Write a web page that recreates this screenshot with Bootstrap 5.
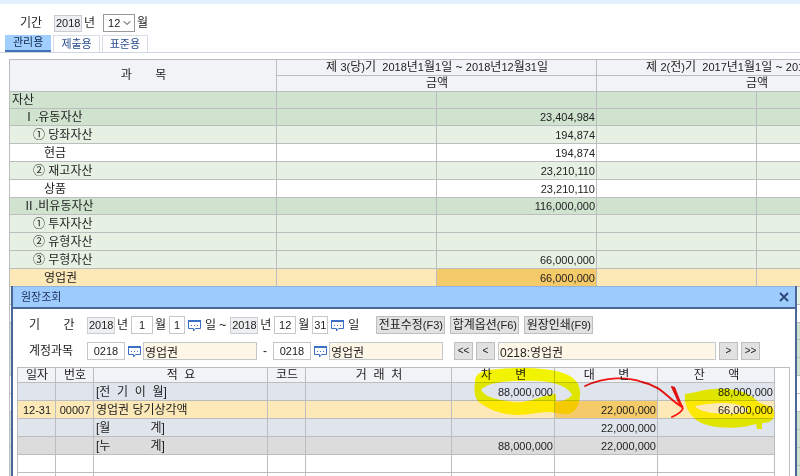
<!DOCTYPE html>
<html lang="ko">
<head>
<meta charset="utf-8">
<meta name="viewport" content="width=device-width, initial-scale=1">
<title>재무상태표 - 원장조회</title>
<link href="https://cdn.jsdelivr.net/npm/bootstrap@5.3.0/dist/css/bootstrap.min.css" rel="stylesheet">
<style>
body { font: 12px/16px "Liberation Sans", "Noto Sans CJK KR", sans-serif; color: #222; background: #fff; }
.screen { height: 100vh; border-top: 4px solid #e3f0ff; }
.num { font-size: 11px; }
.keep { white-space: pre; }
.form-control, .form-select { font-size: 11px; line-height: 16px; padding: 0 2px; border: 1px solid #c4c7cc; border-radius: 0; color: #222; min-height: 0; height: 18px; background-color: #fff; }
.form-control.fixed { background-color: #eeeff1; border-color: #c9ccd2; height: 17px; }
.form-control.acct { background-color: #fef6e6; font-size: 12px; padding: 0 1px; }
.w-year { width: 28px; padding: 0 1px; } .w-mon { width: 22px; } .w-day { width: 16px; padding: 0; } .w-code { width: 38px; } .w-acct { width: 114px; }
.form-select { width: 32px; padding: 0 4px; background-size: 8px 8px; background-position: right 3px center; border-color: #999; }
.unit { margin: 0 3px 0 2px; }
.criteria { padding: 7px 20px 0; height: 31px; }
.criteria .lbl { width: 34px; }
.tabs { border-bottom: 1px solid #cdd6e2; padding: 0 5px; gap: 2px; }
.tabs .nav-link { border: 1px solid #d8dce6; border-bottom: 0; border-radius: 0; padding: 0 7px; color: #2d4f8f; font-size: 11px; line-height: 16px; background: #fff; }
.tabs .nav-link.active { background: #9fceff; color: #14284a; border: 0; border-bottom: 2px solid #4371b8; padding: 0 8px; line-height: 15px; }
.sheet { margin: 6px 0 0 9px; }
table { table-layout: fixed; border-collapse: separate; border-spacing: 0; }
th, td { border-right: 1px solid #bbbdbf; border-bottom: 1px solid #bbbdbf; padding: 0 1px 0 2px; font-weight: 400; white-space: pre; overflow: hidden; height: 18px; line-height: 16px; }
thead th { background: #f2f3f6; text-align: center; height: 16px; line-height: 15px; }
.balance { width: 908px; border-left: 1px solid #bbbdbf; border-top: 1px solid #bbbdbf; }
.grp td { background: #cfe3cf; height: 17px; line-height: 16px; }
.tall td { height: 18px; }
.sub td { background: #e6f0e3; }
.sel td { background: #fde9b8; }
td.cur { background: #f5ca68 !important; }
.in1 { padding-left: 13px; } .in2 { padding-left: 23px; } .in3 { padding-left: 34px; }
.dialog-win { position: absolute; left: 11px; right: 3px; top: 282px; bottom: 0; background: #fff; border: 2px solid #4b679a; border-width: 0 2px; overflow: hidden; }
.dialog-title { background: #9fccff; border-top: 1px solid #8fb3df; border-bottom: 2px solid #4b679a; margin: 0 -1px; height: 23px; padding: 0 7px 0 9px; font-size: 11px; color: #1b2c55; }
.closer { border: 0; background: none; padding: 0; display: flex; }
.fields { padding: 7px 15px 0 16px; }
.line { height: 18px; }
.line .lbl { width: 58px; }
.icon-btn { border: 0; background: none; padding: 0; margin: 0 2px 0 3px; width: 13px; height: 13px; display: flex; flex-shrink: 0; }
.btn-tool { background: #e1e1e1; border: 1px solid #bfbfbf; border-radius: 0; padding: 0; font-size: 12px; line-height: 16px; color: #222; width: 69px; height: 18px; white-space: nowrap; }
.btn-tool.step { width: 19px; font-size: 10px; flex-shrink: 0; }
.tools { gap: 5px; margin-left: 14px; }
.dash { width: 16px; text-align: center; }
.pager { gap: 3px; padding: 0 20px 0 11px; }
.ledger-wrap { margin: 7px 5px 0 4px; border: 1px solid #bbbdbf; border-bottom: 0; padding-right: 14px; }
.ledger thead th { height: 15px; line-height: 14px; }
.carry td { background: #e0e5ed; } .accum td { background: #dcdcdc; }
.marks { position: absolute; left: 470px; top: 358px; pointer-events: none; mix-blend-mode: multiply; }
</style>
<script src="https://cdn.jsdelivr.net/npm/bootstrap@5.3.0/dist/js/bootstrap.bundle.min.js"></script>
</head>
<body>
<main class="screen position-relative overflow-hidden">
  <form class="criteria d-flex align-items-center">
    <label class="lbl" for="yr">기간</label>
    <input id="yr" class="form-control fixed w-year" value="2018" readonly>
    <span class="unit me-2">년</span>
    <select class="form-select" aria-label="월"><option>12</option></select>
    <span class="unit">월</span>
  </form>
  <nav class="nav tabs">
    <a class="nav-link active" href="#">관리용</a>
    <a class="nav-link" href="#">제출용</a>
    <a class="nav-link" href="#">표준용</a>
  </nav>
  <div class="sheet">
    <table class="balance">
      <colgroup><col style="width:267px"><col style="width:160px"><col style="width:160px"><col style="width:160px"><col style="width:160px"></colgroup>
      <thead>
        <tr><th rowspan="2">과       목</th><th colspan="2">제 <span class="num">3(</span>당<span class="num">)</span>기 <span class="num"> 2018</span>년<span class="num">1</span>월<span class="num">1</span>일 ~ <span class="num">2018</span>년<span class="num">12</span>월<span class="num">31</span>일</th><th colspan="2">제 <span class="num">2(</span>전<span class="num">)</span>기 <span class="num"> 2017</span>년<span class="num">1</span>월<span class="num">1</span>일 ~ <span class="num">2017</span>년<span class="num">12</span>월<span class="num">31</span>일</th></tr>
        <tr><th colspan="2">금액</th><th colspan="2">금액</th></tr>
      </thead>
      <tbody>
        <tr class="grp"><td>자산</td><td></td><td></td><td></td><td></td></tr>
        <tr class="grp"><td class="in1">Ⅰ.유동자산</td><td></td><td class="num text-end">23,404,984</td><td></td><td></td></tr>
        <tr class="sub"><td class="in2">① 당좌자산</td><td></td><td class="num text-end">194,874</td><td></td><td></td></tr>
        <tr><td class="in3">현금</td><td></td><td class="num text-end">194,874</td><td></td><td></td></tr>
        <tr class="sub"><td class="in2">② 재고자산</td><td></td><td class="num text-end">23,210,110</td><td></td><td></td></tr>
        <tr><td class="in3">상품</td><td></td><td class="num text-end">23,210,110</td><td></td><td></td></tr>
        <tr class="grp"><td class="in1">Ⅱ.비유동자산</td><td></td><td class="num text-end">116,000,000</td><td></td><td></td></tr>
        <tr class="sub"><td class="in2">① 투자자산</td><td></td><td></td><td></td><td></td></tr>
        <tr class="sub"><td class="in2">② 유형자산</td><td></td><td></td><td></td><td></td></tr>
        <tr class="sub"><td class="in2">③ 무형자산</td><td></td><td class="num text-end">66,000,000</td><td></td><td></td></tr>
        <tr class="sel"><td class="in3">영업권</td><td></td><td class="num text-end cur">66,000,000</td><td></td><td></td></tr>
        <tr class="sub"><td></td><td></td><td></td><td></td><td></td></tr>
        <tr><td></td><td></td><td></td><td></td><td></td></tr>
        <tr class="grp"><td></td><td></td><td></td><td></td><td></td></tr>
        <tr class="grp tall"><td></td><td></td><td></td><td></td><td></td></tr>
        <tr class="grp tall"><td></td><td></td><td></td><td></td><td></td></tr>
        <tr><td></td><td></td><td></td><td></td><td></td></tr>
        <tr><td></td><td></td><td></td><td></td><td></td></tr>
        <tr class="grp tall"><td></td><td></td><td></td><td></td><td></td></tr>
        <tr class="grp tall"><td></td><td></td><td></td><td></td><td></td></tr>
        <tr class="grp tall"><td></td><td></td><td></td><td></td><td></td></tr>
        <tr class="grp tall"><td></td><td></td><td></td><td></td><td></td></tr>
      </tbody>
    </table>
  </div>

  <svg width="0" height="0" class="position-absolute" aria-hidden="true">
    <symbol id="lookup" viewBox="0 0 13 13"><path d="M.5 1.500h12v8H7.500L5.500 12V9.500H.5z" fill="#fff" stroke="#3b70c4"/><path d="M0 1h13v2H0z" fill="#3b70c4"/><path d="M3 6h1v1H3zM6 6h1v1H6zM9 6h1v1H9z" fill="#3b70c4"/></symbol>
  </svg>

  <section class="dialog-win" role="dialog" aria-labelledby="dlg">
    <header class="dialog-title d-flex align-items-center justify-content-between">
      <span id="dlg">원장조회</span>
      <button class="closer" aria-label="닫기"><svg width="10" height="10" viewBox="0 0 10 10"><path d="M1 1l8 8M9 1l-8 8" stroke="#2c4676" stroke-width="1.8"/></svg></button>
    </header>
    <div class="fields">
      <div class="line d-flex align-items-center">
        <label class="lbl keep" for="y1">기       간</label>
        <input id="y1" class="form-control fixed w-year" value="2018" readonly>
        <span class="unit">년</span>
        <input class="form-control w-mon text-center" value="1" aria-label="시작 월">
        <span class="unit">월</span>
        <input class="form-control w-day text-center" value="1" aria-label="시작 일">
        <button class="icon-btn" aria-label="날짜 조회"><svg width="13" height="13"><use href="#lookup"/></svg></button>
        <span class="unit">일</span><span>~</span>
        <input class="form-control fixed w-year ms-1" value="2018" aria-label="종료 연도" readonly>
        <span class="unit">년</span>
        <input class="form-control w-mon text-center" value="12" aria-label="종료 월">
        <span class="unit">월</span>
        <input class="form-control w-day text-center" value="31" aria-label="종료 일">
        <button class="icon-btn" aria-label="날짜 조회"><svg width="13" height="13"><use href="#lookup"/></svg></button>
        <span class="unit">일</span>
        <div class="d-flex tools">
          <button class="btn btn-tool">전표수정<span class="num">(F3)</span></button>
          <button class="btn btn-tool">합계옵션<span class="num">(F6)</span></button>
          <button class="btn btn-tool">원장인쇄<span class="num">(F9)</span></button>
        </div>
      </div>
      <div class="line d-flex align-items-center mt-2">
        <label class="lbl" for="c1">계정과목</label>
        <input id="c1" class="form-control w-code text-center" value="0218">
        <button class="icon-btn" aria-label="계정 조회"><svg width="13" height="13"><use href="#lookup"/></svg></button>
        <input class="form-control acct w-acct" value="영업권" aria-label="시작 계정">
        <span class="dash">-</span>
        <input class="form-control w-code text-center" value="0218" aria-label="종료 코드">
        <button class="icon-btn" aria-label="계정 조회"><svg width="13" height="13"><use href="#lookup"/></svg></button>
        <input class="form-control acct w-acct" value="영업권" aria-label="종료 계정">
        <div class="d-flex flex-grow-1 pager">
          <button class="btn btn-tool step">&lt;&lt;</button>
          <button class="btn btn-tool step">&lt;</button>
          <input class="form-control acct" value="0218:영업권" aria-label="현재 계정">
          <button class="btn btn-tool step">&gt;</button>
          <button class="btn btn-tool step">&gt;&gt;</button>
        </div>
      </div>
    </div>
    <div class="ledger-wrap">
      <table class="ledger w-100">
        <colgroup><col style="width:38px"><col style="width:38px"><col style="width:174px"><col style="width:38px"><col><col style="width:103px"><col style="width:103px"><col style="width:117px"></colgroup>
        <thead><tr><th>일자</th><th>번호</th><th>적  요</th><th>코드</th><th>거  래  처</th><th>차       변</th><th>대       변</th><th>잔       액</th></tr></thead>
        <tbody>
          <tr class="carry"><td></td><td></td><td>[전  기  이  월]</td><td></td><td></td><td class="num text-end">88,000,000</td><td></td><td class="num text-end">88,000,000</td></tr>
          <tr class="sel"><td class="num text-center">12-31</td><td class="num text-center">00007</td><td>영업권 당기상각액</td><td></td><td></td><td></td><td class="num text-end cur">22,000,000</td><td class="num text-end">66,000,000</td></tr>
          <tr class="carry"><td></td><td></td><td>[월            계]</td><td></td><td></td><td></td><td class="num text-end">22,000,000</td><td></td></tr>
          <tr class="accum"><td></td><td></td><td>[누            계]</td><td></td><td></td><td class="num text-end">88,000,000</td><td class="num text-end">22,000,000</td><td></td></tr>
          <tr><td></td><td></td><td></td><td></td><td></td><td></td><td></td><td></td></tr>
          <tr><td></td><td></td><td></td><td></td><td></td><td></td><td></td><td></td></tr>
        </tbody>
      </table>
    </div>
  </section>

  <svg class="marks" width="320" height="80" viewBox="470 362 320 80" aria-hidden="true">
    <path fill="#ffff00" fill-rule="evenodd" d="M475 382C475 372 484 370 500 369C520 367 550 368 563 373C576 377 581 386 580 395C579 407 575 413 567 414L556 413C545 410 532 415 518 415C500 415 489 409 480 403C474 398 474 390 475 382zM481 390C486 384 500 381 522 381C546 380 567 384 572 395C569 399 562 401 556 402L556 394C540 395 530 404 513 402C499 400 486 398 481 390z"/>
    <path fill="#ffff00" fill-rule="evenodd" d="M685 394C696 393 702 389 716 389C735 388 750 393 756 400C763 406 769 405 773 408C776 416 774 423 762 423L762 429L757 429L756 424C738 430 705 429 695 419C687 412 684 402 685 394zM695 406C706 404 730 400 744 407C753 411 747 413 735 414C718 414 700 413 695 406z"/>
    <path fill="none" stroke="#ff1515" stroke-width="1.8" stroke-linecap="round" stroke-linejoin="round" d="M585 386C606 376 629 377 642 382C662 386 668 399 682 407L672 387M682 406Q685 411 672 417"/>
    <path fill="#ff1515" d="M671 386L675 387L684 410L679 405z"/>
  </svg>
</main>
</body>
</html>
